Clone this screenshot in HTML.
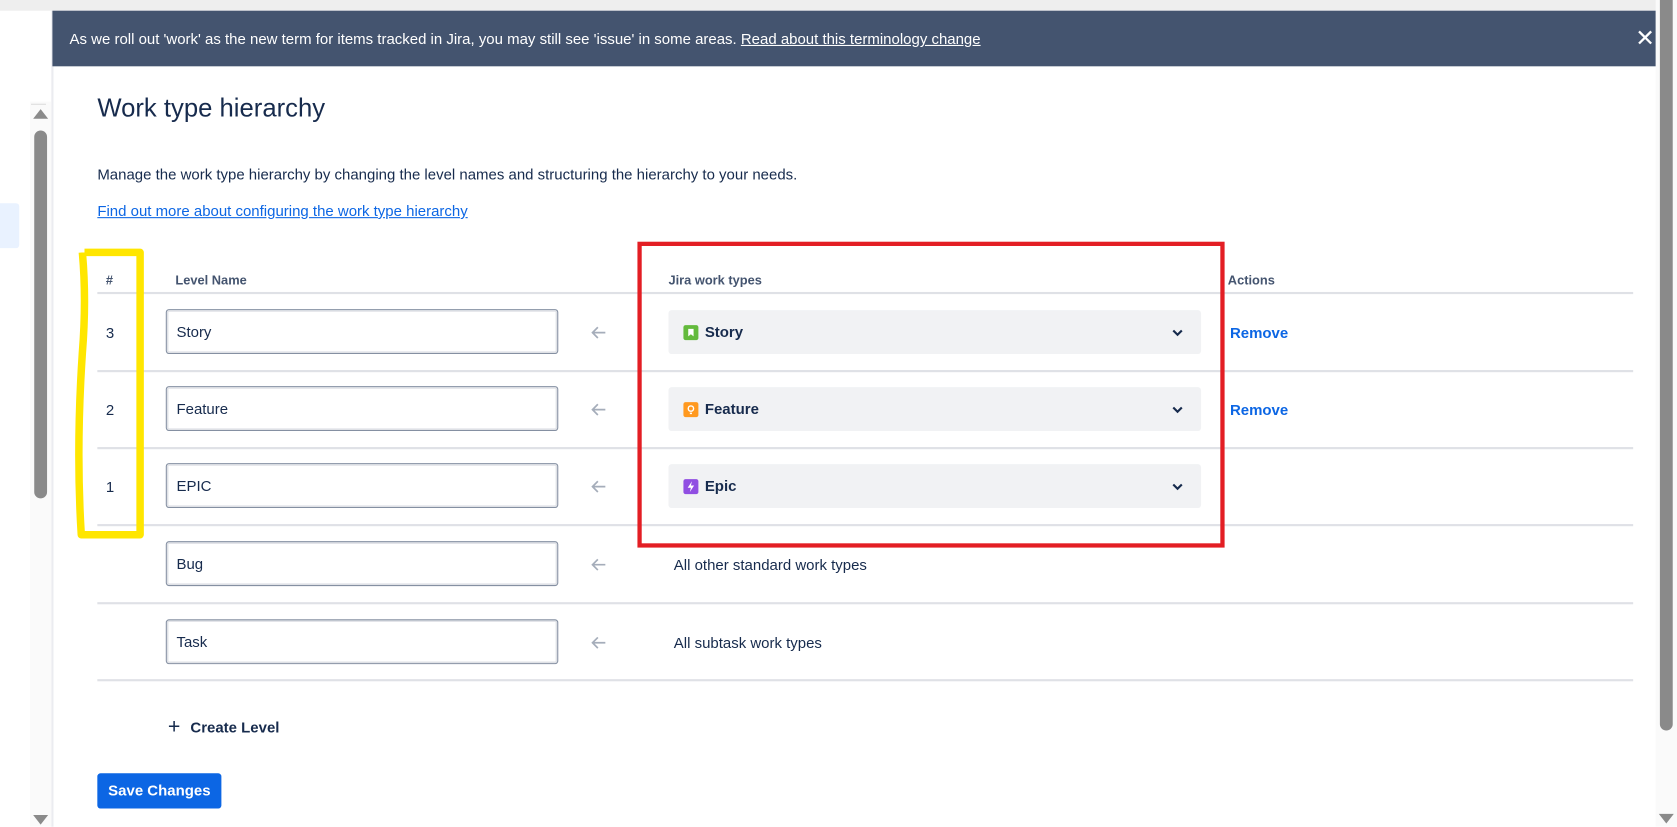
<!DOCTYPE html>
<html><head><meta charset="utf-8"><style>
html,body{margin:0;padding:0;width:1677px;height:826px;overflow:hidden;background:#fff;font-family:"Liberation Sans",Arial,sans-serif;}
#w{position:absolute;left:0;top:0;width:1568px;height:773px;transform:scale(1.06952);transform-origin:0 0;color:#172b4d;}
.a{position:absolute;}
.hd{font-size:12px;font-weight:bold;color:#44546f;top:255px;}
.line{position:absolute;left:91px;width:1436px;height:2px;background:#dfe1e6;}
.num{position:absolute;left:99px;font-size:14px;}
.inp{position:absolute;left:155px;height:40px;border:1.5px solid #8590a2;border-radius:3px;box-shadow:inset 0 0 0 1.5px #dfe1e6;font-size:14px;line-height:40px;padding-left:9px;box-sizing:content-box;width:356px;}
.arr{position:absolute;left:551px;}
.sel{position:absolute;left:625px;width:498px;height:41px;background:#f1f2f4;border-radius:3px;font-size:14px;font-weight:bold;line-height:41px;}
.sel .ic{position:absolute;left:14px;top:14px;width:14px;height:14px;border-radius:2px;line-height:0;}
.sel .ic svg{display:block;}
.sel .t{position:absolute;left:34px;}
.sel svg.ch{position:absolute;left:471px;top:17px;}
.rm{position:absolute;left:1150px;font-size:14px;font-weight:bold;color:#0c66e4;}
.txt{position:absolute;left:630px;font-size:14px;}
</style></head><body><div id="w">
<div class="a" style="left:0;top:0;width:1568px;height:10px;background:#eeeeee"></div>
<div class="a" style="left:48px;top:10px;width:2px;height:763px;background:#ebecf0"></div>
<div class="a" style="left:0;top:190px;width:18px;height:42px;background:#e9f2ff;border-radius:0 3px 3px 0"></div>
<div class="a" style="left:28px;top:95px;width:20px;height:678px;background:#fafafa"></div>
<div class="a" style="left:29px;top:97px;width:14px;height:1px;background:#ddd"></div>
<div class="a" style="left:31px;top:102px;width:0;height:0;border-left:7px solid transparent;border-right:7px solid transparent;border-bottom:9px solid #8a8a8a"></div>
<div class="a" style="left:32px;top:122px;width:12px;height:344px;background:#8a8a8a;border-radius:6px"></div>
<div class="a" style="left:31px;top:762px;width:0;height:0;border-left:7px solid transparent;border-right:7px solid transparent;border-top:9px solid #8a8a8a"></div>
<div class="a" style="left:1548px;top:0;width:20px;height:773px;background:#fafafa"></div>
<div class="a" style="left:1552px;top:0;width:12px;height:683px;background:#8a8a8a;border-radius:0 0 6px 6px"></div>
<div class="a" style="left:1551px;top:761px;width:0;height:0;border-left:7px solid transparent;border-right:7px solid transparent;border-top:9px solid #8a8a8a"></div>
<div class="a" style="left:49px;top:10px;width:1499px;height:52px;background:#44546f;color:#fff;font-size:14px;line-height:52px;"><span style="margin-left:16px">As we roll out 'work' as the new term for items tracked in Jira, you may still see 'issue' in some areas. <u>Read about this terminology change</u></span>
<span style="position:absolute;left:1480px;top:0;font-size:22px;">✕</span></div>
<div class="a" style="left:91px;top:88px;font-size:24px;font-weight:500;">Work type hierarchy</div>
<div class="a" style="left:91px;top:155px;font-size:14px;">Manage the work type hierarchy by changing the level names and structuring the hierarchy to your needs.</div>
<div class="a" style="left:91px;top:189px;font-size:14px;color:#0c66e4;text-decoration:underline;">Find out more about configuring the work type hierarchy</div>
<div class="a hd" style="left:99px">#</div>
<div class="a hd" style="left:164px">Level Name</div>
<div class="a hd" style="left:625px">Jira work types</div>
<div class="a hd" style="left:1148px">Actions</div>
<div class="line" style="top:273px"></div>
<div class="line" style="top:346px"></div>
<div class="line" style="top:418px"></div>
<div class="line" style="top:490px"></div>
<div class="line" style="top:563px"></div>
<div class="line" style="top:635px"></div>
<div class="num" style="top:303px">3</div>
<div class="num" style="top:375px">2</div>
<div class="num" style="top:447px">1</div>
<div class="inp" style="top:289px">Story</div>
<div class="inp" style="top:361px">Feature</div>
<div class="inp" style="top:433px">EPIC</div>
<div class="inp" style="top:506px">Bug</div>
<div class="inp" style="top:579px">Task</div>
<svg class="arr" style="top:302px" width="18" height="18" viewBox="0 0 18 18"><path d="M15 9H3M8 4L3 9l5 5" stroke="#a5adba" stroke-width="1.6" fill="none"/></svg>
<svg class="arr" style="top:374px" width="18" height="18" viewBox="0 0 18 18"><path d="M15 9H3M8 4L3 9l5 5" stroke="#a5adba" stroke-width="1.6" fill="none"/></svg>
<svg class="arr" style="top:446px" width="18" height="18" viewBox="0 0 18 18"><path d="M15 9H3M8 4L3 9l5 5" stroke="#a5adba" stroke-width="1.6" fill="none"/></svg>
<svg class="arr" style="top:519px" width="18" height="18" viewBox="0 0 18 18"><path d="M15 9H3M8 4L3 9l5 5" stroke="#a5adba" stroke-width="1.6" fill="none"/></svg>
<svg class="arr" style="top:592px" width="18" height="18" viewBox="0 0 18 18"><path d="M15 9H3M8 4L3 9l5 5" stroke="#a5adba" stroke-width="1.6" fill="none"/></svg>
<div class="sel" style="top:290px"><div class="ic" style="background:#63ba3c"><svg width="14" height="14"><path d="M4.5 3.5h5v7L7 8.5 4.5 10.5z" fill="#fff"/></svg></div><span class="t">Story</span><svg class="ch" width="10" height="8"><path d="M1 2l4 4 4-4" stroke="#172b4d" stroke-width="2" fill="none"/></svg></div>
<div class="sel" style="top:362px"><div class="ic" style="background:#ff991f"><svg width="14" height="14"><circle cx="7" cy="6" r="2.5" stroke="#fff" stroke-width="1.3" fill="none"/><path d="M6 10.5h2" stroke="#fff" stroke-width="1.3"/></svg></div><span class="t">Feature</span><svg class="ch" width="10" height="8"><path d="M1 2l4 4 4-4" stroke="#172b4d" stroke-width="2" fill="none"/></svg></div>
<div class="sel" style="top:434px"><div class="ic" style="background:#904ee2"><svg width="14" height="14"><path d="M8 2L4 8h3l-1 4 4-6H7z" fill="#fff"/></svg></div><span class="t">Epic</span><svg class="ch" width="10" height="8"><path d="M1 2l4 4 4-4" stroke="#172b4d" stroke-width="2" fill="none"/></svg></div>
<div class="rm" style="top:303px">Remove</div>
<div class="rm" style="top:375px">Remove</div>
<div class="txt" style="top:520px">All other standard work types</div>
<div class="txt" style="top:593px">All subtask work types</div>
<div class="a" style="left:157px;top:671px;font-size:20px;line-height:18px;">+</div>
<div class="a" style="left:178px;top:672px;font-size:14px;font-weight:bold;">Create Level</div>
<div class="a" style="left:91px;top:723px;width:116px;height:33px;background:#0c66e4;border-radius:3px;color:#fff;font-size:14px;font-weight:bold;line-height:33px;text-align:center;">Save Changes</div>
<div class="a" style="left:596px;top:226px;width:541px;height:278px;border:4px solid #e31e24;"></div>
<svg class="a" style="left:0;top:0" width="200" height="560"><path d="M79 236H131V500H76Q71 420 77 330Q81 280 77 236" stroke="#ffe600" stroke-width="7" fill="none" stroke-linejoin="round"/></svg>
</div></body></html>
